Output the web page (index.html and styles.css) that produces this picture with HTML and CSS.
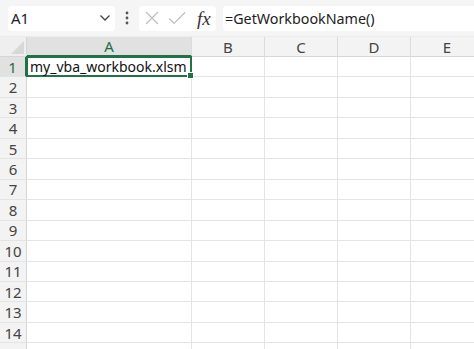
FILE: index.html
```html
<!DOCTYPE html>
<html>
<head>
<meta charset="utf-8">
<link rel="stylesheet" href="styles.css">
</head>
<body>
<div class="toolbar">
  <div class="namebox">
    <span class="name">A1</span>
    <svg class="chev" width="12" height="8" viewBox="0 0 12 8"><path d="M1.5 1.5 L6 6 L10.5 1.5" fill="none" stroke="#444" stroke-width="1.3"/></svg>
  </div>
  <div class="dots">
    <svg width="4" height="14" viewBox="0 0 4 14"><circle cx="2" cy="2" r="1.4" fill="#555"/><circle cx="2" cy="7" r="1.4" fill="#555"/><circle cx="2" cy="12" r="1.4" fill="#555"/></svg>
  </div>
  <div class="fxbox">
    <svg class="xicon" width="14" height="14" viewBox="0 0 14 14"><path d="M1 1 L13 13 M13 1 L1 13" fill="none" stroke="#bdbdbd" stroke-width="1.2"/></svg>
    <svg class="check" width="18" height="14" viewBox="0 0 18 14"><path d="M1 7.5 L6 12.5 L17 1.5" fill="none" stroke="#bdbdbd" stroke-width="1.2"/></svg>
    <span class="fx">fx</span>
  </div>
  <div class="formula">=GetWorkbookName()</div>
</div>
<div class="sheet">
  <div class="corner"><svg width="27" height="20" viewBox="0 0 27 20"><path d="M24 4 L24 17 L11 17 Z" fill="#d8d8d8"/></svg></div>
  <div class="colhead sel">A</div>
  <div class="colhead">B</div>
  <div class="colhead">C</div>
  <div class="colhead">D</div>
  <div class="colhead">E</div>

  <div class="rowhead sel">1</div><div class="cell active">my_vba_workbook.xlsm<span class="handle"></span></div><div class="cell"></div><div class="cell"></div><div class="cell"></div><div class="cell"></div>
  <div class="rowhead">2</div><div class="cell"></div><div class="cell"></div><div class="cell"></div><div class="cell"></div><div class="cell"></div>
  <div class="rowhead">3</div><div class="cell"></div><div class="cell"></div><div class="cell"></div><div class="cell"></div><div class="cell"></div>
  <div class="rowhead">4</div><div class="cell"></div><div class="cell"></div><div class="cell"></div><div class="cell"></div><div class="cell"></div>
  <div class="rowhead">5</div><div class="cell"></div><div class="cell"></div><div class="cell"></div><div class="cell"></div><div class="cell"></div>
  <div class="rowhead">6</div><div class="cell"></div><div class="cell"></div><div class="cell"></div><div class="cell"></div><div class="cell"></div>
  <div class="rowhead">7</div><div class="cell"></div><div class="cell"></div><div class="cell"></div><div class="cell"></div><div class="cell"></div>
  <div class="rowhead">8</div><div class="cell"></div><div class="cell"></div><div class="cell"></div><div class="cell"></div><div class="cell"></div>
  <div class="rowhead">9</div><div class="cell"></div><div class="cell"></div><div class="cell"></div><div class="cell"></div><div class="cell"></div>
  <div class="rowhead">10</div><div class="cell"></div><div class="cell"></div><div class="cell"></div><div class="cell"></div><div class="cell"></div>
  <div class="rowhead">11</div><div class="cell"></div><div class="cell"></div><div class="cell"></div><div class="cell"></div><div class="cell"></div>
  <div class="rowhead">12</div><div class="cell"></div><div class="cell"></div><div class="cell"></div><div class="cell"></div><div class="cell"></div>
  <div class="rowhead">13</div><div class="cell"></div><div class="cell"></div><div class="cell"></div><div class="cell"></div><div class="cell"></div>
  <div class="rowhead">14</div><div class="cell"></div><div class="cell"></div><div class="cell"></div><div class="cell"></div><div class="cell"></div>
  <div class="rowhead"></div><div class="cell"></div><div class="cell"></div><div class="cell"></div><div class="cell"></div><div class="cell"></div>
</div>
</body>
</html>
```
FILE: styles.css
```css
html, body {
  margin: 0;
  padding: 0;
  background: #fff;
  overflow: hidden;
}
body {
  font-family: "Noto Sans", "Open Sans", sans-serif;
  color: #222;
  width: 474px;
  height: 349px;
}
.toolbar {
  height: 37px;
  background: #f5f5f5;
  display: flex;
  align-items: center;
  padding-left: 8px;
  box-sizing: border-box;
  border-bottom: 1px solid #ececec;
}
.namebox {
  width: 107px;
  height: 25px;
  background: #fff;
  border-radius: 4px;
  display: flex;
  align-items: center;
  justify-content: space-between;
  padding: 0 4px 0 3px;
  box-sizing: border-box;
}
.name {
  font-size: 15px;
  color: #222;
}
.dots {
  width: 24px;
  display: flex;
  justify-content: center;
  align-items: center;
}
.fxbox {
  width: 77px;
  height: 25px;
  background: #fff;
  border-radius: 4px;
  display: flex;
  align-items: center;
  padding-left: 6px;
  box-sizing: border-box;
}
.xicon { margin-right: 9px; }
.check { margin-right: 11px; }
.fx {
  font-family: "Liberation Serif", "DejaVu Serif", serif;
  font-style: italic;
  font-size: 19px;
  color: #333;
  line-height: 1;
}
.formula {
  flex: 1;
  height: 25px;
  margin-left: 7px;
  background: #fff;
  border-radius: 4px 0 0 4px;
  font-size: 14.3px;
  color: #222;
  display: flex;
  align-items: center;
  padding-left: 2px;
}
.sheet {
  display: grid;
  grid-template-columns: 27px 165px 73px 73px 73px 73px;
  grid-template-rows: 20px repeat(15, 20.46px);
}
.corner {
  background: #efefef;
  border-right: 1px solid #d6d6d6;
  border-bottom: 1px solid #d6d6d6;
  box-sizing: border-box;
}
.corner svg { display: block; }
.colhead {
  background: #f3f3f3;
  border-right: 1px solid #dcdcdc;
  border-bottom: 1px solid #d6d6d6;
  box-sizing: border-box;
  font-size: 15px;
  color: #444;
  display: flex;
  align-items: center;
  justify-content: center;
}
.colhead.sel {
  background: #e1e1e1;
  color: #1e6e45;
  border-bottom: 2px solid #217346;
}
.rowhead {
  background: #f3f3f3;
  border-right: 1px solid #d6d6d6;
  border-bottom: 1px solid #e4e4e4;
  box-sizing: border-box;
  font-size: 15px;
  color: #444;
  display: flex;
  align-items: center;
  justify-content: center;
}
.rowhead.sel {
  background: #e1e1e1;
  color: #1e6e45;
  border-right: 2px solid #217346;
}
.cell {
  border-right: 1px solid #e4e4e4;
  border-bottom: 1px solid #e4e4e4;
  box-sizing: border-box;
}
.cell.active {
  position: relative;
  border: 2px solid #217346;
  margin-left: -1px;
  margin-top: -1px;
  font-size: 14px;
  color: #111;
  display: flex;
  align-items: center;
  padding-left: 2px;
  white-space: nowrap;
}
.handle {
  position: absolute;
  right: -4px;
  bottom: -4px;
  width: 5px;
  height: 5px;
  background: #217346;
  border: 1px solid #fff;
}
```
